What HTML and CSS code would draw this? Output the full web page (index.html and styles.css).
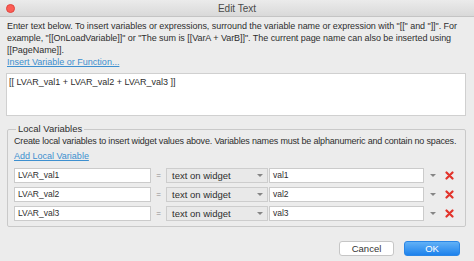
FILE: index.html
```html
<!DOCTYPE html>
<html lang="en">
  <head>
    <meta charset="UTF-8" />
    <title>Edit Text</title>
    <link rel="stylesheet" href="styles.css">
  </head>
  <body>
    <div class="titlebar">
      <span class="close-dot"></span>
      <span class="title">Edit Text</span>
      <span class="spacer"></span>
    </div>

    <div class="content">
      <div class="intro">
        <div>Enter text below. To insert variables or expressions, surround the variable name or expression with "[[" and "]]". For</div>
        <div>example, "[[OnLoadVariable]]" or "The sum is [[VarA + VarB]]". The current page name can also be inserted using</div>
        <div>[[PageName]].</div>
      </div>
      <a href="#" class="link">Insert Variable or Function...</a>

      <div class="text-area">[[ LVAR_val1 + LVAR_val2 + LVAR_val3 ]]</div>

      <fieldset class="local-vars">
        <legend>Local Variables</legend>
        <p class="hint">Create local variables to insert widget values above. Variables names must be alphanumeric and contain no spaces.</p>
        <a href="#" class="link add-link">Add Local Variable</a>

        <div class="var-row">
          <div class="input-box name-box">LVAR_val1</div>
          <span class="equals">=</span>
          <div class="select-box">text on widget<span class="caret"></span></div>
          <div class="input-box value-box">val1</div>
          <span class="caret-wrap"><span class="caret"></span></span>
          <svg class="remove" width="9" height="9" viewBox="0 0 9 9"><path d="M1.5 1.5 L7.5 7.5 M7.5 1.5 L1.5 7.5" stroke="#e2332b" stroke-width="2.2" stroke-linecap="round"/></svg>
        </div>
        <div class="var-row">
          <div class="input-box name-box">LVAR_val2</div>
          <span class="equals">=</span>
          <div class="select-box">text on widget<span class="caret"></span></div>
          <div class="input-box value-box">val2</div>
          <span class="caret-wrap"><span class="caret"></span></span>
          <svg class="remove" width="9" height="9" viewBox="0 0 9 9"><path d="M1.5 1.5 L7.5 7.5 M7.5 1.5 L1.5 7.5" stroke="#e2332b" stroke-width="2.2" stroke-linecap="round"/></svg>
        </div>
        <div class="var-row">
          <div class="input-box name-box">LVAR_val3</div>
          <span class="equals">=</span>
          <div class="select-box">text on widget<span class="caret"></span></div>
          <div class="input-box value-box">val3</div>
          <span class="caret-wrap"><span class="caret"></span></span>
          <svg class="remove" width="9" height="9" viewBox="0 0 9 9"><path d="M1.5 1.5 L7.5 7.5 M7.5 1.5 L1.5 7.5" stroke="#e2332b" stroke-width="2.2" stroke-linecap="round"/></svg>
        </div>
      </fieldset>

      <div class="buttons">
        <button type="button" class="cancel-button">Cancel</button>
        <button type="button" class="ok-button">OK</button>
      </div>
    </div>
  </body>
</html>
```

FILE: styles.css
```css
body {
  margin: 0;
  width: 474px;
  height: 261px;
  overflow: hidden;
  background-color: #ececec;
  font-family: "Liberation Sans", Arial, sans-serif;
  font-size: 9px;
  color: #2e2e2e;
}
.titlebar {
  height: 16px;
  display: flex;
  align-items: center;
  background: linear-gradient(#ebebeb, #d9d9d9);
  border-bottom: 1px solid #c4c4c4;
}
.close-dot {
  width: 9px;
  height: 9px;
  margin-left: 6px;
  border-radius: 50%;
  background-color: #fc5d55;
  border: 0.5px solid #e0463f;
  box-sizing: border-box;
}
.title {
  flex: 1;
  text-align: center;
  font-size: 10px;
  color: #4a4a4a;
}
.spacer {
  width: 15px;
}
.content {
  padding: 3px 8px 0 7px;
}
.intro {
  line-height: 12px;
  white-space: nowrap;
  letter-spacing: -0.05px;
}
.link {
  display: block;
  line-height: 12px;
  color: #3d8fcf;
  text-decoration: underline;
}
.text-area {
  margin: 5px 0 0 -1px;
  width: 460px;
  height: 43px;
  box-sizing: border-box;
  padding: 2px 2px;
  background-color: white;
  border: 1px solid #d0d0d0;
  line-height: 12px;
}
.local-vars {
  margin: 7px 0 0 0;
  width: 459px;
  box-sizing: border-box;
  padding: 0 5px 5px 6px;
  border: 1px solid #c9c9c9;
  border-radius: 2px;
}
.local-vars legend {
  padding: 0 2px;
  margin-left: 2px;
  line-height: 12px;
  font-size: 9.5px;
}
.hint {
  margin: 0;
  line-height: 12px;
  white-space: nowrap;
  letter-spacing: -0.18px;
}
.add-link {
  margin-top: 3px;
}
.var-row {
  display: flex;
  align-items: center;
  margin-top: 4px;
}
.var-row:first-of-type {
  margin-top: 6px;
}
.input-box {
  height: 15px;
  box-sizing: border-box;
  border: 1px solid #cbcbcb;
  background-color: white;
  padding: 0 3px;
  line-height: 13px;
  font-size: 8.5px;
}
.name-box {
  width: 137px;
}
.equals {
  width: 15px;
  text-align: center;
  color: #8a8a8a;
  font-size: 8px;
}
.select-box {
  position: relative;
  width: 102px;
  height: 15px;
  box-sizing: border-box;
  border: 1px solid #cdcdcd;
  background-color: #e9e9e9;
  padding: 0 5px;
  line-height: 13px;
  font-size: 9.5px;
}
.select-box .caret {
  position: absolute;
  right: 4px;
  top: 5px;
}
.caret {
  display: inline-block;
  width: 0;
  height: 0;
  border-left: 3px solid transparent;
  border-right: 3px solid transparent;
  border-top: 3px solid #858585;
}
.value-box {
  width: 155px;
  margin-left: 1px;
}
.caret-wrap {
  width: 17px;
  display: flex;
  justify-content: center;
}
.remove {
  margin-left: 4px;
}
.buttons {
  display: flex;
  justify-content: flex-end;
  gap: 10px;
  margin-top: 14px;
  padding-right: 6px;
}
.buttons button {
  height: 15px;
  border-radius: 3px;
  font-family: "Liberation Sans", Arial, sans-serif;
  font-size: 9.5px;
  padding: 0;
  line-height: 13px;
}
.cancel-button {
  width: 55px;
  background-color: white;
  border: 1px solid #c6c6c6;
  color: #333;
}
.ok-button {
  width: 56px;
  background: linear-gradient(#62b1f6, #1d82ec);
  border: 1px solid #2a86e6;
  color: white;
}
```
